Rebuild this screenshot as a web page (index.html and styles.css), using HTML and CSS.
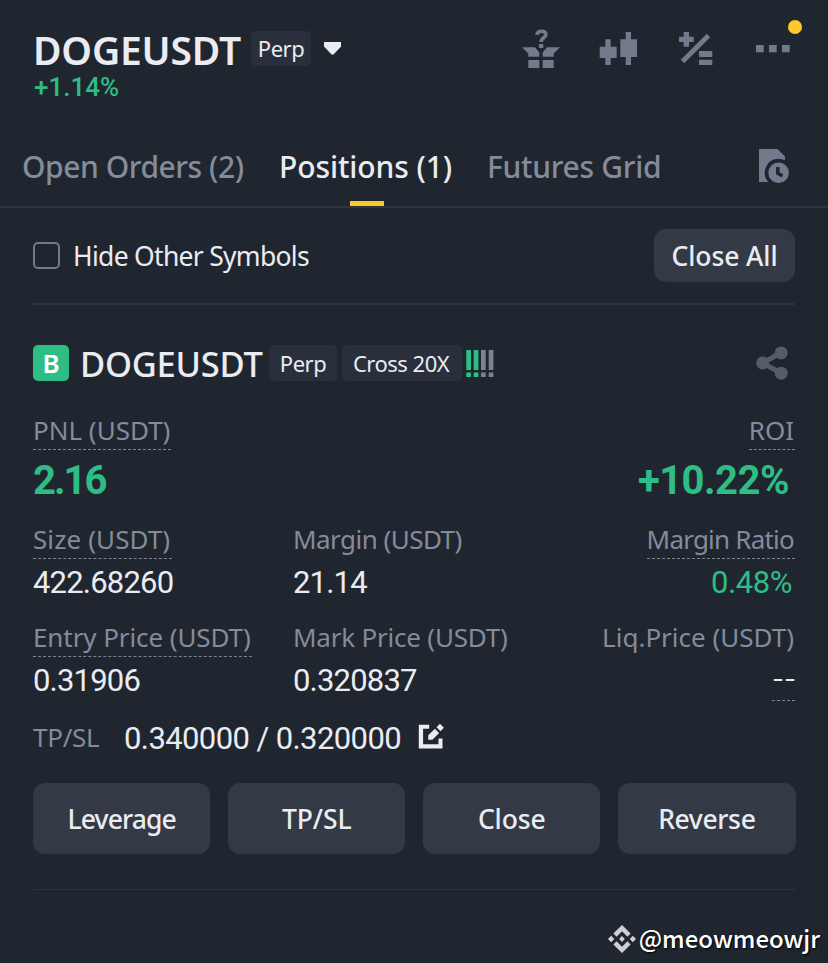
FILE: index.html
```html
<!DOCTYPE html>
<html lang="en">
<head>
<meta charset="utf-8">
<title>DOGEUSDT Perp</title>
<link rel="stylesheet" href="styles.css">
</head>
<body>
<header class="top">
  <div class="pair">
    <div class="pair-line">
      <h1>DOGEUSDT</h1>
      <span class="tag tag-top">Perp</span>
      <svg class="caret" width="17" height="13" viewBox="0 0 17 13"><path d="M0 0h17v4.5L9.500 12.500h-2L0 4.500z"/></svg>
    </div>
    <div class="change">+1.14%</div>
  </div>
  <nav class="tools">
    <svg width="40" height="40" viewBox="521 28 40 40">
      <path d="M522 47.300h13l4.300 5.200v4.200h-11v-3.200zM560 47.300h-13l-4.300 5.200v4.200h11v-3.200zM528.300 60h11v8h-11zM542.700 60h11v8h-11zM539 44h4.300v4H539z"/>
      <path class="line" stroke-width="3.600" d="M537 34.800c.2-2.400 1.800-3.500 4.300-3.500 2.800 0 4.600 1.200 4.600 3.300 0 3.400-4.900 2.900-4.900 7.400"/>
    </svg>
    <svg width="40" height="40" viewBox="599 28 40 40">
      <path d="M599.700 46.700h5.600v-7.400h5.400v7.400h6V58h-6v7h-5.400v-7h-5.600zM620.300 39.300h5.400V32h5.300v7.300h6V57h-6v8h-5.300v-8h-5.400z"/>
    </svg>
    <svg width="40" height="40" viewBox="677 28 40 40">
      <path d="M679 36.700h4.700V32h5.300v4.700h4.700V42H689v4.700h-5.300V42H679zM699 51h13.300v6H699zM699 59.700h13.300V65H699z"/>
      <path class="line" stroke-width="5" d="M682.500 61.500l26-26"/>
    </svg>
    <span class="more">
      <svg width="40" height="40" viewBox="755 28 40 40">
        <path d="M756 45h7.700v7.300H756zM769 45h7.700v7.300H769zM782 45h7.700v7.300H782z"/>
      </svg>
      <i class="dot"></i>
    </span>
  </nav>
</header>

<nav class="tabs">
  <a class="tab orders">Open Orders (2)</a>
  <a class="tab active">Positions (1)</a>
  <a class="tab grid-tab">Futures Grid</a>
  <svg class="history" width="32" height="36" viewBox="758 148 32 36">
    <path d="M759 149h18.500l7.500 7.500v3.700A14 14 0 0 0 768.200 182H759z"/>
    <circle cx="778.600" cy="172.700" r="10.300"/>
    <path class="hands" d="M777.800 167v6.300l4.700 2.700"/>
  </svg>
</nav>

<main>
  <section class="filter">
    <label class="hide"><span class="box"></span><span class="hide-text">Hide Other Symbols</span></label>
    <button class="btn close-all">Close All</button>
  </section>

  <article class="position">
    <div class="head">
      <span class="side">B</span>
      <h2>DOGEUSDT</h2>
      <span class="tag tag-perp">Perp</span>
      <span class="tag tag-cross">Cross 20X</span>
      <svg class="risk" width="28" height="28" viewBox="0 0 28 28">
        <path class="on" d="M.3 0h4.700v20H.3zM7.700 0h4.700v20H7.700zM.3 22.500h4.700V27H.3zM7.700 22.500h4.700V27H7.700z"/>
        <path class="off" d="M15 0h4.700v20H15zM22.700 0h4.700v20h-4.700zM15 22.500h4.700V27H15zM22.700 22.500h4.700V27h-4.700z"/>
      </svg>
      <svg class="share" width="32" height="36" viewBox="756 345 32 36">
        <path d="M781 352.700l-18.300 10.200 18.300 10.300"/>
        <circle cx="762.700" cy="362.900" r="6.500"/><circle cx="781.200" cy="352.900" r="6.500"/><circle cx="781.200" cy="373.200" r="6.500"/>
      </svg>
    </div>

    <div class="row">
      <div class="cell"><span class="label tip">PNL (USDT)</span><span class="big pnl">2.16</span></div>
      <div class="cell end"><span class="label tip">ROI</span><span class="big roi">+10.22%</span></div>
    </div>
    <div class="row">
      <div class="cell"><span class="label tip size">Size (USDT)</span><span class="value">422.68260</span></div>
      <div class="cell"><span class="label margin">Margin (USDT)</span><span class="value">21.14</span></div>
      <div class="cell end"><span class="label tip ratio">Margin Ratio</span><span class="value up">0.48%</span></div>
    </div>
    <div class="row">
      <div class="cell"><span class="label tip entry">Entry Price (USDT)</span><span class="value">0.31906</span></div>
      <div class="cell"><span class="label mark">Mark Price (USDT)</span><span class="value">0.320837</span></div>
      <div class="cell end"><span class="label liq">Liq.Price (USDT)</span><span class="value none">--</span></div>
    </div>
    <div class="tpsl">
      <span class="tpsl-label">TP/SL</span>
      <span class="tpsl-value">0.340000 / 0.320000</span>
      <svg width="27" height="27" viewBox="418.500 722.500 27 27">
        <path d="M419.300 724.300h10.400v4h-6.100v15.400h15.400V738h4v10h-23.700zM428.700 739.300v-4.500l6.700-6.600 4.200 4.200-6.700 6.900zM437 726.800l3.400-3.500 4 4-3.400 3.500z"/>
      </svg>
    </div>

    <div class="actions">
      <button class="btn lev">Leverage</button>
      <button class="btn">TP/SL</button>
      <button class="btn">Close</button>
      <button class="btn rev">Reverse</button>
    </div>
  </article>
</main>

<footer>
  <svg width="28" height="28" viewBox="0 0 126.600 126.600"><path d="M38.730 53.200l24.590-24.580 24.600 24.600 14.300-14.310L63.320 0l-38.900 38.900zM0 63.310L14.300 49l14.310 14.310-14.310 14.300zM38.730 73.410L63.320 98l24.600-24.600 14.310 14.290-38.910 38.910-38.900-38.880zM98 63.310L112.300 49l14.310 14.300-14.310 14.320zM76.320 63.300l-13-13-13 13 13 13z"/></svg>
  <span>@meowmeowjr</span>
</footer>
</body>
</html>
```
FILE: styles.css
```css
* { box-sizing: border-box; }
body {
  margin: 0;
  height: 963px;
  overflow: hidden;
  background: #20262f;
  color: #eaecf2;
  font-family: "Noto Sans", sans-serif;
  white-space: nowrap;
}
h1, h2 { margin: 0; }
svg { display: block; flex: none; }

.top {
  height: 138px;
  padding: 25px 33px 0;
  display: flex;
  justify-content: space-between;
}
.pair-line { display: flex; height: 48px; }
h1 { width: 218px; font-size: 39px; font-weight: 600; line-height: 49px; letter-spacing: -.18px; }
.tag {
  border-radius: 5px;
  background: #2a303b;
  text-align: center;
  font-size: 22px;
  letter-spacing: -.5px;
}
.tag-top { width: 60px; height: 35px; line-height: 35px; margin-top: 6px; }
.caret { margin: 17px 0 0 13px; fill: #eaecf2; }
.change {
  color: #2ebd85;
  font: 500 26px/29px Roboto, sans-serif;
  margin-left: 1px;
}
.tools { display: flex; gap: 38px; padding-top: 3px; fill: #727a8b; }
.line { fill: none; stroke: #727a8b; }
.more { position: relative; }
.dot {
  position: absolute;
  top: -8px;
  right: -7px;
  width: 14px;
  height: 14px;
  border-radius: 50%;
  background: #fccb2b;
}

.tabs {
  height: 70px;
  padding: 0 38px 0 22px;
  border-bottom: 2px solid #2e3440;
  display: grid;
  grid-template-columns: 257px 208px 1fr auto;
}
.tab {
  justify-self: start;
  position: relative;
  height: 68px;
  line-height: 58px;
  font-size: 30px;
  font-weight: 500;
  color: #848b9a;
}
.orders { letter-spacing: -.45px; }
.active { color: #eaecf2; letter-spacing: -.1px; }
.grid-tab { letter-spacing: -.29px; }
.active::after {
  content: "";
  position: absolute;
  left: calc(50% - 16px);
  bottom: 0;
  width: 34px;
  height: 5px;
  background: #fcc825;
}
.history { margin-top: 10px; fill: #727a8b; }
.hands { fill: none; stroke: #20262f; stroke-width: 3.6; }

main { padding: 0 33px; }
.filter {
  height: 97px;
  border-bottom: 2px solid #2e3440;
  display: flex;
  align-items: center;
  justify-content: space-between;
}
.hide { display: flex; align-items: center; gap: 13px; }
.box { width: 27px; height: 27px; border: 2px solid #727a8b; border-radius: 5px; }
.hide-text { font-size: 26.500px; line-height: 34px; letter-spacing: -.71px; padding-top: 1px; }
.btn {
  border: 0;
  padding: 0;
  border-radius: 12px;
  background: #343a45;
  color: #eaecf2;
  font: 500 26.500px/34px "Noto Sans", sans-serif;
  letter-spacing: -.1px;
}
.close-all { width: 141px; height: 53px; padding-top: 1px; }

.position { padding-top: 40px; height: 585px; border-bottom: 1px solid #2e3440; }
.head { display: flex; height: 36px; }
.side {
  width: 36px;
  border-radius: 5px;
  background: #2ebd85;
  color: #fff;
  text-align: center;
  font-size: 26px;
  font-weight: 600;
  line-height: 36px;
}
h2 { width: 189px; margin-left: 11px; font-size: 34.500px; font-weight: 500; line-height: 38px; letter-spacing: -.25px; }
.head .tag { line-height: 36px; }
.tag-perp { width: 68px; }
.head .tag-cross { width: 120px; margin-left: 5px; padding-right: 2px; }
.risk { margin: 5px 0 0 4px; }
.on { fill: #2ebd85; }
.off { fill: #7c8290; }
.share { margin: 0 7px 0 auto; fill: #565c69; }
.share path { fill: none; stroke: #565c69; stroke-width: 5; }

.row { display: grid; grid-template-columns: 260px 240px 1fr; height: 98px; }
.head + .row { grid-template-columns: 1fr 1fr; height: 109px; margin-top: 32px; }
.cell { display: flex; flex-direction: column; align-items: flex-start; }
.end { align-items: flex-end; }
.label {
  height: 37px;
  line-height: 34px;
  font-size: 26px;
  color: #848b9a;
}
.tip { border-bottom: 1px dashed #7b8291; padding-right: 1px; }
.size { letter-spacing: .1px; padding-right: 2px; }
.margin { letter-spacing: -.53px; }
.ratio { letter-spacing: -.78px; }
.entry { letter-spacing: -.09px; }
.mark { letter-spacing: -.21px; }
.liq { padding-right: 1px; }
.value { font: 400 31px/36px Roboto, sans-serif; letter-spacing: -.8px; padding-top: 6px; }
.up { color: #2ebd85; letter-spacing: -.45px; padding-right: 3px; }
.big { font: 700 40px/44px Roboto, sans-serif; color: #2ebd85; padding-top: 9px; }
.pnl { letter-spacing: -2px; }
.roi { letter-spacing: -.53px; padding-right: 6px; }
.none {
  width: 23px;
  height: 44px;
  font: 400 26px/32px Inter, sans-serif;
  letter-spacing: 0;
  border-bottom: 1px dashed #7b8291;
}
.tpsl { display: flex; height: 36px; margin-top: 3px; }
.tpsl-label { width: 91px; line-height: 33px; font-size: 26px; color: #848b9a; letter-spacing: -.28px; }
.tpsl-value { width: 294px; font: 400 31px/36px Roboto, sans-serif; letter-spacing: -.6px; }
.tpsl svg { margin-top: 1.500px; fill: #eaecf2; }
.actions { display: grid; grid-template-columns: repeat(4, 1fr); gap: 17.700px; margin: 26.300px -.5px 0 0; }
.actions .btn { height: 70.500px; padding-top: 1px; }
.actions .lev { letter-spacing: -.9px; }
.actions .rev { letter-spacing: -.37px; }

footer {
  display: flex;
  justify-content: flex-end;
  gap: 3px;
  padding: 35px 8px 0 0;
  font: 500 24px/26px "Noto Sans CJK SC", sans-serif;
  color: #fff;
  text-shadow: 1px 1px 2px #000;
}
footer svg { fill: #cfcfcf; }
```
